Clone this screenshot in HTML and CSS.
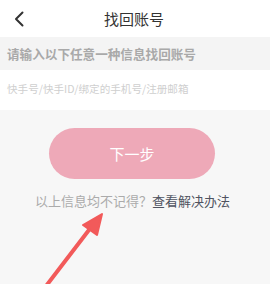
FILE: index.html
```html
<!DOCTYPE html>
<html lang="zh">
<head>
<meta charset="utf-8">
<link rel="stylesheet" href="styles.css">
</head>
<body>
<div class="page">
  <header class="nav">
    <div class="back">
      <svg width="12" height="16" viewBox="0 0 12 16"><path d="M9.5 1.5 L3 8 L9.5 14.5" fill="none" stroke="#333" stroke-width="2" stroke-linecap="round" stroke-linejoin="round"/></svg>
    </div>
    <div class="title">找回账号</div>
    <div></div>
  </header>
  <div class="hint">请输入以下任意一种信息找回账号</div>
  <div class="input">快手号/快手ID/绑定的手机号/注册邮箱</div>
  <main class="body">
    <div class="btn">下一步</div>
    <p class="help"><span class="muted">以上信息均不记得？</span><span class="link">查看解决办法</span></p>
  </main>
  <svg class="arrow" width="270" height="284" viewBox="0 0 270 284">
    <line x1="43" y1="290" x2="92" y2="226" stroke="#f25a5a" stroke-width="4" stroke-linecap="round"/>
    <polygon points="102,214 83,225 97,235" fill="#f25a5a" stroke="#f25a5a" stroke-width="2" stroke-linejoin="round"/>
  </svg>
</div>
</body>
</html>
```
FILE: styles.css
```css
html, body {
  margin: 0;
  padding: 0;
}
body {
  width: 270px;
  height: 284px;
  overflow: hidden;
  font-family: "Noto Sans CJK SC", "Noto Sans", sans-serif;
  background: #f7f7f7;
}
.page {
  position: relative;
  width: 270px;
  height: 284px;
  display: flex;
  flex-direction: column;
}
.nav {
  height: 37px;
  background: #fff;
  display: grid;
  grid-template-columns: 1fr auto 1fr;
  align-items: center;
}
.back {
  padding-left: 13px;
  display: flex;
  align-items: center;
  padding-top: 1px;
}
.title {
  font-size: 15px;
  color: #333;
  padding-right: 2px;
}
.hint {
  height: 33px;
  background: #f4f4f4;
  display: flex;
  align-items: center;
  padding-left: 7px;
  font-size: 12.6px;
  font-weight: bold;
  color: #a9a9a9;
}
.input {
  height: 40px;
  background: #fff;
  display: flex;
  align-items: center;
  padding-left: 7px;
  font-size: 10.6px;
  color: #cfcfcf;
  padding-bottom: 4px;
  box-sizing: border-box;
}
.body {
  flex: 1;
  background: #f7f7f7;
  padding-top: 18px;
}
.btn {
  margin-left: 49px;
  width: 166px;
  height: 51px;
  border-radius: 26px;
  background: #eea9b8;
  color: #fff;
  font-size: 15px;
  display: flex;
  align-items: center;
  justify-content: center;
}
.help {
  margin: 13px 0 0;
  font-size: 13px;
  line-height: 18px;
  text-align: center;
  padding-right: 5px;
}
.muted {
  color: #ababab;
}
.link {
  color: #4f5360;
}
.arrow {
  position: absolute;
  left: 0;
  top: 0;
  pointer-events: none;
}
```
